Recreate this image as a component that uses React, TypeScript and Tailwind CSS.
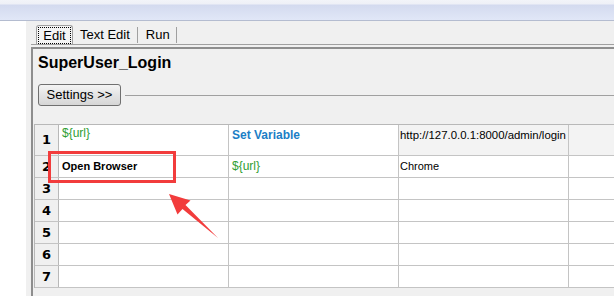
import React from "react";

const rows = [1, 2, 3, 4, 5, 6, 7];

export default function App() {
  return (
    <div
      className="relative w-[614px] h-[296px] overflow-hidden bg-[#f0f0f0]"
      style={{ fontFamily: '"Liberation Sans", Arial, sans-serif' }}
    >
      {/* top bar */}
      <div className="h-[21px] border-b border-[#b4bcd0] bg-[linear-gradient(to_bottom,#f2f4f9_0px,#eef0f7_4px,#d3daef_5px,#e1e7f7_20px)]" />
      <div className="flex h-[275px]">
        {/* left white panel */}
        <div className="w-[26px] shrink-0 bg-white" />
        {/* main area */}
        <div className="flex-1 flex flex-col pl-[5px] min-w-0">
          {/* tab strip */}
          <div className="flex items-end h-[24px] border-b border-[#a0a0a0] pl-[5px] text-[13px] text-black">
            <div className="w-[37px] h-[19px] border border-b-0 border-[#a0a0a0] rounded-t-[3px] bg-[#f4f4f4] px-[1px] pt-[1px]">
              <div className="h-[17px] border border-dotted border-black flex items-center justify-center leading-[15px]">
                Edit
              </div>
            </div>
            <div className="h-[19px] flex items-center">
              <span className="pl-[7px] pr-[7px] leading-[16px]">Text Edit</span>
              <div className="w-px h-[16px] bg-[#a0a0a0]" />
              <span className="pl-[8px] pr-[6px] leading-[16px]">Run</span>
              <div className="w-px h-[16px] bg-[#a0a0a0]" />
            </div>
          </div>
          {/* panel */}
          <div className="mt-[2px] flex-1 border-t-2 border-l-2 border-[#8e8e8e] flex flex-col min-w-0">
            <div className="pl-[5px] mt-[5px] h-[18px] leading-[18px] text-[16px] font-bold text-black">
              SuperUser_Login
            </div>
            <div className="flex items-center pl-[5px] mt-[12px]">
              <div className="w-[83px] h-[22px] shrink-0 rounded-[3px] border border-[#707070] bg-[linear-gradient(to_bottom,#f4f4f4,#e4e4e4_50%,#d6d6d6)] flex items-center justify-center text-[13px] text-black">
                Settings &gt;&gt;
              </div>
              <div className="flex-1 h-px ml-[4px] bg-[#a0a0a0]" />
            </div>
            {/* grid */}
            <div className="mt-[18px] ml-[1px] border-l border-t border-[#b8b8b8] w-[700px]">
              {rows.map((r) => {
                const first = r === 1;
                return (
                  <div
                    key={r}
                    className={`flex border-b border-[#c4c4c4] ${first ? "h-[31px]" : "h-[22px]"}`}
                  >
                    <div
                      className="w-[24px] shrink-0 border-r border-[#b8b8b8] bg-[#f0f0f0] flex items-center justify-center text-[13px] font-bold text-black"
                      style={{ fontFamily: '"DejaVu Sans", Verdana, sans-serif' }}
                    >
                      {r}
                    </div>
                    <div className="w-[170px] shrink-0 border-r border-[#c4c4c4] bg-white pl-[3px]">
                      {r === 1 && (
                        <div className="pt-[1px] leading-[14px] text-[12px] text-[#2f9e33]">{"${url}"}</div>
                      )}
                      {r === 2 && (
                        <div className="h-full flex items-center pb-[1px] text-[11px] font-bold text-black">
                          Open Browser
                        </div>
                      )}
                    </div>
                    <div className="w-[170px] shrink-0 border-r border-[#c4c4c4] bg-white pl-[3px]">
                      {r === 1 && (
                        <div className="pt-[3px] leading-[14px] text-[12px] font-bold text-[#1b7ec6]">Set Variable</div>
                      )}
                      {r === 2 && (
                        <div className="h-full flex items-center pb-[1px] text-[12px] text-[#2f9e33]">{"${url}"}</div>
                      )}
                    </div>
                    <div
                      className={`w-[170px] shrink-0 border-r border-[#c4c4c4] pl-[1px] ${first ? "bg-[#f3f3f3]" : "bg-white"}`}
                    >
                      {r === 1 && (
                        <div className="pt-[3px] leading-[14px] text-[11.4px] text-black whitespace-nowrap">
                          http://127.0.0.1:8000/admin/login
                        </div>
                      )}
                      {r === 2 && (
                        <div className="h-full flex items-center pb-[1px] text-[11px] text-black">Chrome</div>
                      )}
                    </div>
                    <div className={`flex-1 ${first ? "bg-[#f3f3f3]" : "bg-white"}`} />
                  </div>
                );
              })}
            </div>
          </div>
        </div>
      </div>

      {/* red highlight box */}
      <div className="absolute left-[48px] top-[151px] w-[128px] h-[32px] border-[3px] border-[#f23c3c]" />
      {/* red arrow */}
      <svg className="absolute left-0 top-0" width="614" height="296" viewBox="0 0 614 296">
        <polygon
          points="169,194 177.5,214.5 182.5,209 218,238 185.5,205 190.5,200.5"
          fill="#f23c3c"
        />
      </svg>
    </div>
  );
}
